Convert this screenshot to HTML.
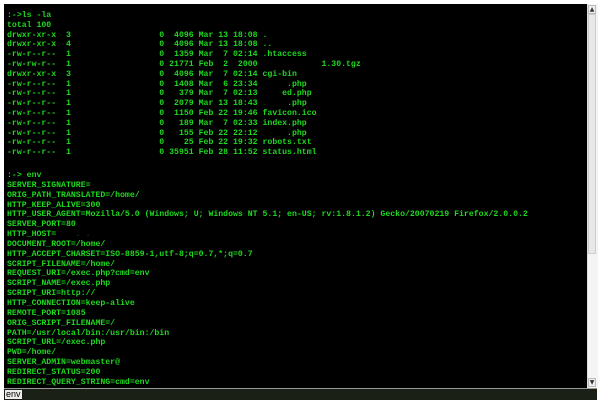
<!DOCTYPE html>
<html><head><meta charset="utf-8"><style>
html,body{margin:0;padding:0;background:#fff;width:600px;height:406px;overflow:hidden}
#term{position:absolute;left:4px;top:4px;width:583px;height:384px;background:#000;overflow:hidden}
pre{margin:0;position:absolute;left:3px;font-family:"Liberation Mono",monospace;font-size:8.2px;line-height:9.8px;color:#1ed81e;font-weight:bold;white-space:pre}
#p1{top:7px}
#p2{top:167px;line-height:9.85px}
#sb{position:absolute;left:587px;top:4px;width:10px;height:384px;background:#f4f4f4;border-left:1px solid #ddd}
#thumb{position:absolute;left:588px;top:14px;width:8px;height:240px;background:#e8e8e8;border:1px solid #ccc;box-sizing:border-box}
.ar{position:absolute;left:588px;width:8px;height:9px;background:#eee;border:1px solid #bbb;box-sizing:border-box;font:6px "DejaVu Sans",sans-serif;text-align:center;line-height:7px;color:#333}
#inp{position:absolute;left:4px;top:388px;width:593px;height:12px;background:#1a2016;border-top:1px solid #999;box-sizing:border-box}
#inp span{position:absolute;left:1px;top:1px;background:#eee;color:#000;font:9px "Liberation Sans",sans-serif;line-height:9px;padding:0 1px}
.f{color:#0a4a0a}
</style></head><body>
<div id="term"><pre id="p1">:->ls -la
total 100
drwxr-xr-x  3                  0  4096 Mar 13 18:08 .
drwxr-xr-x  4                  0  4096 Mar 13 18:08 ..
-rw-r--r--  1                  0  1359 Mar  7 02:14 .htaccess
-rw-rw-r--  1                  0 21771 Feb  2  2000             1.30.tgz
drwxr-xr-x  3                  0  4096 Mar  7 02:14 cgi-bin
-rw-r--r--  1                  0  1408 Mar  6 23:34      .php
-rw-r--r--  1                  0   379 Mar  7 02:13     ed.php
-rw-r--r--  1                  0  2079 Mar 13 18:43 <span class="f">.</span>    .php
-rw-r--r--  1                  0  1150 Feb 22 19:46 favicon.ico
-rw-r--r--  1                  0   189 Mar  7 02:33 index.php
-rw-r--r--  1                  0   155 Feb 22 22:12      .php
-rw-r--r--  1                  0    25 Feb 22 19:32 robots.txt
-rw-r--r--  1                  0 35951 Feb 28 11:52 status.html</pre><pre id="p2">:-> env
SERVER_SIGNATURE=
ORIG_PATH_TRANSLATED=/home/
HTTP_KEEP_ALIVE=300
HTTP_USER_AGENT=Mozilla/5.0 (Windows; U; Windows NT 5.1; en-US; rv:1.8.1.2) Gecko/20070219 Firefox/2.0.0.2
SERVER_PORT=80
HTTP_HOST=    <span class="f">. .</span>
DOCUMENT_ROOT=/home/
HTTP_ACCEPT_CHARSET=ISO-8859-1,utf-8;q=0.7,*;q=0.7
SCRIPT_FILENAME=/home/
REQUEST_URI=/exec.php?cmd=env
SCRIPT_NAME=/exec.php
SCRIPT_URI=http://
HTTP_CONNECTION=keep-alive
REMOTE_PORT=1085
ORIG_SCRIPT_FILENAME=/
PATH=/usr/local/bin:/usr/bin:/bin
SCRIPT_URL=/exec.php
PWD=/home/
SERVER_ADMIN=webmaster@
REDIRECT_STATUS=200
REDIRECT_QUERY_STRING=cmd=env</pre></div>
<div id="sb"></div>
<div id="thumb"></div>
<div class="ar" style="top:5px">&#9650;</div>
<div class="ar" style="top:378px">&#9660;</div>
<div id="inp"><span>env</span></div>
</body></html>
